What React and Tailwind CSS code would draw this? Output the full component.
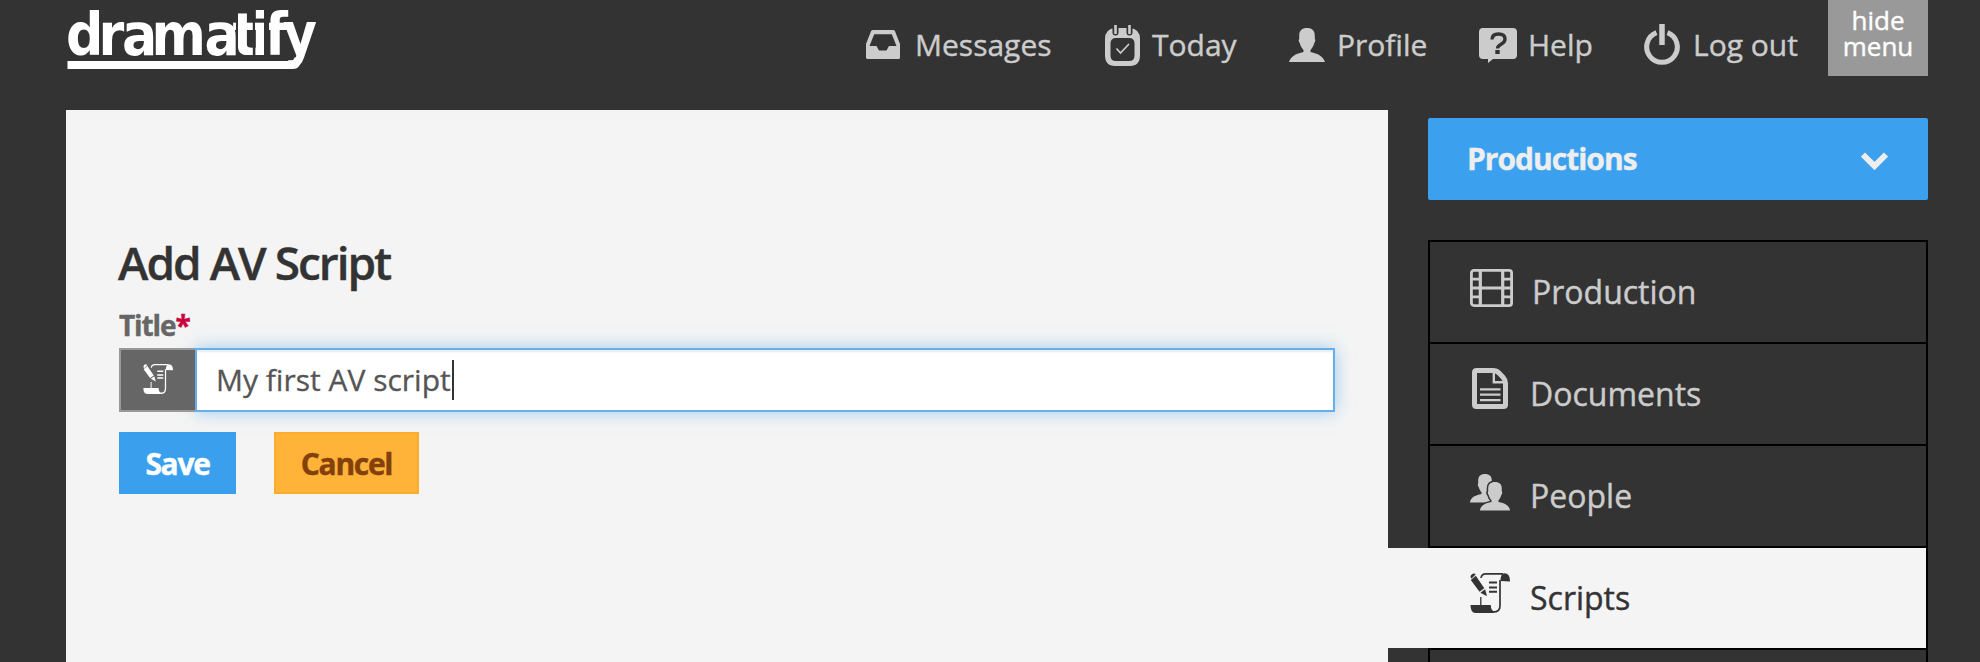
import React from "react";

const Logo = () => (
  <svg width="260" height="84" viewBox="0 -16 260 84" className="block" role="img" aria-label="dramatify">
    <defs>
      <clipPath id="letter-gaps">
        <path d="M-1-16H34.200V60H-1zM35.600-16H170V60H35.600zM172-16H186.800V60H172zM189-16H198V60H189zM203-16H260V60H203z" />
      </clipPath>
    </defs>
    <g clipPath="url(#letter-gaps)" fill="#fff" style={{ fontFamily: "'DejaVu Sans Condensed', 'DejaVu Sans', sans-serif", fontStretch: "condensed" }} fontSize="58" fontWeight="700">
      <text y="44" x="0 32.5 56 85.6 138.5 166.5 185.6 199 217">dramatify</text>
    </g>
    <path d="M1.500 50H224q3.500 0 4.500-3.500l8.500-.5-3 7.500Q232 58 226.500 58H1.500z" fill="#fff" />
  </svg>
);

const InboxIcon = () => (
  <svg width="34" height="29" viewBox="0 0 34 29" fill="currentColor">
    <path fillRule="evenodd" d="M7 0h20q1.500 0 2 1.300L34 14v13.500Q34 29 32.500 29h-31Q0 29 0 27.500V14L5 1.300Q5.500 0 7 0zM8.200 4.200L3.500 16h7l2.500 4.500h7.500l2.500-4.500h7.500L25.800 4.200z" />
  </svg>
);

const CalendarIcon = () => (
  <svg width="35" height="41" viewBox="0 0 35 41" fill="currentColor">
    <path fillRule="evenodd" d="M10 3h15q10 1 10 11v16q0 11-10 11H10Q0 41 0 30V14Q0 4 10 3zM11 13q-5.500 0-5.500 5.500v12Q5.500 36 11 36h13q5.500 0 5.500-5.500v-12Q29.500 13 24 13z" />
    <path d="M7.500 0v7.500q0 3 3 3t3-3V0zM21.500 0v7.500q0 3 3 3t3-3V0z" fill="#333" />
    <path d="M9.200 0h2.600v9H9.200zM23.200 0h2.600v9h-2.600z" />
    <path d="M11.500 23.500l4 4.500 8.500-9" fill="none" stroke="currentColor" strokeWidth="1.700" />
  </svg>
);

const PersonIcon = () => (
  <svg width="36" height="34" viewBox="0 0 36 34" fill="currentColor">
    <path d="M18 0c5 0 7.800 2.500 7.800 7.500v3.500c.8.800.6 2.800-.6 4.300-.8 3-2 5-3.700 6.700v2C29 25.500 34 28.500 36 34H0c2-5.500 7-8.500 14.500-10v-2c-1.700-1.700-2.900-3.700-3.700-6.700-1.200-1.500-1.400-3.500-.6-4.300V7.500C10.200 2.500 13 0 18 0z" />
  </svg>
);

const HelpIcon = () => (
  <svg width="38" height="35" viewBox="0 0 38 35">
    <path d="M4 0h30q4 0 4 4v23q0 4-4 4H14l-5 4v-4H4q-4 0-4-4V4Q0 0 4 0z" fill="currentColor" />
    <path d="M13 11.500Q13 6 19.500 6q6.500 0 6.500 5 0 3-3.200 4.800-4.300 2.400-4.300 4.700" fill="none" stroke="#333" strokeWidth="3.400" />
    <path d="M16.300 22h4.400v4h-4.400z" fill="#333" />
  </svg>
);

const PowerIcon = () => (
  <svg width="36" height="41" viewBox="0 0 36 41" fill="none" stroke="currentColor">
    <path d="M12.500 8.700a15.300 15.300 0 1 0 11 0" strokeWidth="5" />
    <path d="M18 0v21" strokeWidth="5.500" />
  </svg>
);

const FilmIcon = () => (
  <svg width="43" height="38" viewBox="0 0 43 38" fill="none" stroke="currentColor">
    <rect x="1.400" y="1.400" width="40.200" height="35.200" rx="2.500" strokeWidth="2.800" />
    <path d="M10.300 1v36M32.700 1v36" strokeWidth="3.200" />
    <path d="M10 19h23M1 10.200h9M1 19h9M1 27.800h9M33 10.200h9M33 19h9M33 27.800h9" strokeWidth="2.800" />
  </svg>
);

const DocumentIcon = () => (
  <svg width="36" height="41" viewBox="0 0 36 41" fill="none" stroke="currentColor">
    <path d="M4.500 2.500H21q3.500 0 6 2.500l4 4.300q2.500 2.700 2.500 6V36.500q0 2-2 2h-27q-2 0-2-2v-32q0-2 2-2z" strokeWidth="5" />
    <path d="M21.800 3v11.200h12" strokeWidth="2.400" />
    <path d="M8 21.300h20.500M8 26.700h20.500M8 32.200h20.500" strokeWidth="2.200" />
  </svg>
);

const personPath =
  "M25 8c4.500 0 6.800 2.300 6.800 6.500v3c.7.700.5 2.300-.5 3.500-.7 2.500-1.600 4-2.800 5.200v1.800C35 29.200 39.500 31.500 40 36.500H10c.5-5 5-7.300 11.500-8.500v-1.800c-1.200-1.200-2.100-2.700-2.800-5.200-1-1.200-1.200-2.800-.5-3.500v-3C18.200 10.300 20.500 8 25 8z";

const PeopleIcon = () => (
  <svg width="40" height="37" viewBox="0 0 40 37" fill="currentColor">
    <path d={personPath} transform="translate(-10 -8)" />
    <path d={personPath} stroke="#333" strokeWidth="3" />
    <path d={personPath} />
  </svg>
);

const ScriptIcon = ({ size = 40 }) => (
  <svg width={size} height={size} viewBox="0 0 40 40" fill="currentColor">
    <path d="M1 2.200Q3-.8 5.800 1.300L1.600 5.600Q-.2 4.300 1 2.200zM.8 7L5.800 2.800l8.500 12.400-4.800 3.600zM10.400 19.800l4.700-3.600 1.900 7z" />
    <path d="M11 5Q11.500.9 16 .9h17" fill="none" stroke="currentColor" strokeWidth="1.600" />
    <path d="M30.500 8Q30.500.2 34.500.2 40 .2 40 8.400z" />
    <path d="M30 7v25.500q0 6.500-6.500 6.500" fill="none" stroke="currentColor" strokeWidth="1.700" />
    <path d="M.5 32h20.300q0 6 4.200 6.500l-1.500 1.400H5.500Q.5 39.900.5 32z" />
    <path d="M10.800 24v9" stroke="currentColor" strokeWidth="1.300" />
    <path d="M19 9.500h8M19 14.500h8M19 18.800h8" stroke="currentColor" strokeWidth="2" />
  </svg>
);

const navItems = [
  { label: "Messages", icon: <InboxIcon />, item: "w-[239px]", slot: "w-[49px] pt-[30px]" },
  { label: "Today", icon: <CalendarIcon />, item: "w-[184px]", slot: "w-[47px] pt-[25px]" },
  { label: "Profile", icon: <PersonIcon />, item: "w-[190px]", slot: "w-12 pt-[28px]" },
  { label: "Help", icon: <HelpIcon />, item: "w-[165px]", slot: "w-[49px] pt-[28px]" },
  { label: "Log out", icon: <PowerIcon />, item: "w-[184px]", slot: "w-[49px] pt-[24px]" },
];

const menuItems = [
  { label: "Production", icon: <FilmIcon />, slot: "w-[62px] pt-[27px]" },
  { label: "Documents", icon: <DocumentIcon />, slot: "w-[60px] pl-[2px] pt-[24px]" },
  { label: "People", icon: <PeopleIcon />, slot: "w-[60px] pt-[28px]" },
  { label: "Scripts", icon: <ScriptIcon />, slot: "w-[60px] pt-[25px]", active: true },
];

export default function App() {
  return (
    <div className="flex h-[662px] w-[1980px] flex-col overflow-hidden bg-[#333] font-['Open_Sans',sans-serif] text-[#ccc]">
      <header className="flex h-[110px] shrink-0 items-start">
        <div className="w-[800px] shrink-0 pl-[66px]">
          <div className="-mt-[5px]">
            <Logo />
          </div>
        </div>
        <nav className="flex pl-[66px] text-[30px] leading-[89px] [-webkit-text-stroke:0.4px]">
          {navItems.map((n) => (
            <a key={n.label} className={`flex shrink-0 items-start whitespace-nowrap ${n.item}`}>
              <span className={`shrink-0 ${n.slot}`}>{n.icon}</span>
              {n.label}
            </a>
          ))}
        </nav>
        <button className="flex h-[76px] w-[100px] shrink-0 flex-col items-center bg-[#999] pt-[7px] text-[26px] leading-[26px] text-white [-webkit-text-stroke:0.4px]">
          <span>hide</span>
          <span>menu</span>
        </button>
      </header>

      <div className="flex flex-1 pl-[66px]">
        <main className="w-[1322px] shrink-0 bg-[#f4f4f4] pl-[53px] pt-[124px]">
          <h1 className="-ml-px h-[72px] whitespace-nowrap text-[46px] font-semibold leading-[56px] tracking-[-2px] text-[#333] [-webkit-text-stroke:0.4px]">
            Add AV Script
          </h1>
          <label className="block h-[42px] text-[28px] font-bold leading-[38px] tracking-[-1.100px] text-[#666] [-webkit-text-stroke:0.4px]">
            Title<span className="text-[#c9003c]">*</span>
          </label>
          <div className="flex h-16 w-[1216px]">
            <span className="relative z-10 flex w-[76px] shrink-0 items-start border-2 border-r-0 border-[#999] bg-[#666] pl-[22px] pt-[14px] text-white">
              <ScriptIcon size={30} />
            </span>
            <div className="flex flex-1 items-center border-2 border-[#66afe9] bg-white pl-[19px] text-[30px] leading-[60px] text-[#555] shadow-[inset_0_2px_2px_rgba(0,0,0,0.075),0_0_16px_rgba(102,175,233,0.6)]">
              <span className="mr-px whitespace-nowrap [-webkit-text-stroke:0.3px]">My first AV script</span>
              <span className="h-10 w-[2px] bg-[#333]" />
            </div>
          </div>
          <div className="mt-5 flex gap-[38px] text-[30px] font-bold leading-[57px] tracking-[-1.300px] [-webkit-text-stroke:0.4px]">
            <button className="h-[62px] w-[117px] border-2 border-[#389fee] bg-[#3aa0ee] text-white">Save</button>
            <button className="h-[62px] w-[145px] border-2 border-[#ffab2b] bg-[#ffb338] text-[#84400b]">Cancel</button>
          </div>
        </main>

        <aside className="w-[540px] shrink-0 pt-2">
          <button className="ml-10 flex h-[82px] w-[500px] items-center justify-between rounded-[2px] bg-[#3ba1ee] pl-[39px] pr-10 text-[30px] font-bold tracking-[-1px] text-[#eee]">
            <span className="pb-[2px] [-webkit-text-stroke:0.4px]">Productions</span>
            <svg width="27" height="18" viewBox="0 0 27 18" className="mt-1" fill="none" stroke="currentColor" strokeWidth="6">
              <path d="M2 2.500l11.500 11.500L25 2.500" />
            </svg>
          </button>
          <ul className="mt-10 text-[32px] leading-[100px]">
            {menuItems.map((m) => (
              <li key={m.label} className="flex h-[102px]">
                <div className={m.active ? "mt-[2px] w-10 bg-[#f4f4f4]" : "w-10"} />
                <div
                  className={
                    m.active
                      ? "flex w-[500px] border-t-2 border-black bg-[#f4f4f4] pl-[42px] text-[#333] shadow-[inset_-2px_0_0_#000]"
                      : "flex w-[500px] border-2 border-b-0 border-black pl-10"
                  }
                >
                  <span className={`shrink-0 ${m.slot}`}>{m.icon}</span>
                  <span className="[-webkit-text-stroke:0.4px]">{m.label}</span>
                </div>
              </li>
            ))}
            <li className="ml-10 h-[102px] w-[500px] border-2 border-black" />
          </ul>
        </aside>
      </div>
    </div>
  );
}
